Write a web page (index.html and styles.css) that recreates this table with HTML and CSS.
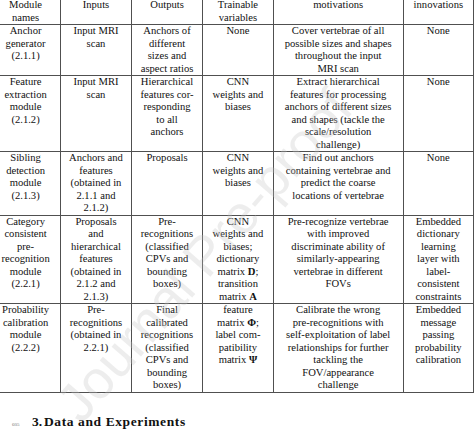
FILE: index.html
```html
<!DOCTYPE html>
<html>
<head>
<meta charset="utf-8">
<link rel="stylesheet" href="styles.css">
</head>
<body>
<div class="page">
  <table class="tbl">
    <colgroup>
      <col class="c1"><col class="c2"><col class="c3"><col class="c4"><col class="c5"><col class="c6">
    </colgroup>
    <tr>
      <td>Module<br>names</td>
      <td>Inputs</td>
      <td>Outputs</td>
      <td>Trainable<br>variables</td>
      <td>motivations</td>
      <td>innovations</td>
    </tr>
    <tr>
      <td>Anchor<br>generator<br>(2.1.1)</td>
      <td>Input MRI<br>scan</td>
      <td>Anchors of<br>different<br>sizes and<br>aspect ratios</td>
      <td>None</td>
      <td>Cover vertebrae of all<br>possible sizes and shapes<br>throughout the input<br>MRI scan</td>
      <td>None</td>
    </tr>
    <tr>
      <td>Feature<br>extraction<br>module<br>(2.1.2)</td>
      <td>Input MRI<br>scan</td>
      <td>Hierarchical<br>features cor-<br>responding<br>to all<br>anchors</td>
      <td>CNN<br>weights and<br>biases</td>
      <td>Extract hierarchical<br>features for processing<br>anchors of different sizes<br>and shapes (tackle the<br>scale/resolution<br>challenge)</td>
      <td>None</td>
    </tr>
    <tr>
      <td>Sibling<br>detection<br>module<br>(2.1.3)</td>
      <td>Anchors and<br>features<br>(obtained in<br>2.1.1 and<br>2.1.2)</td>
      <td>Proposals</td>
      <td>CNN<br>weights and<br>biases</td>
      <td>Find out anchors<br>containing vertebrae and<br>predict the coarse<br>locations of vertebrae</td>
      <td>None</td>
    </tr>
    <tr>
      <td>Category<br>consistent<br>pre-<br>recognition<br>module<br>(2.2.1)</td>
      <td>Proposals<br>and<br>hierarchical<br>features<br>(obtained in<br>2.1.2 and<br>2.1.3)</td>
      <td>Pre-<br>recognitions<br>(classified<br>CPVs and<br>bounding<br>boxes)</td>
      <td>CNN<br>weights and<br>biases;<br>dictionary<br>matrix <b>D</b>;<br>transition<br>matrix <b>A</b></td>
      <td>Pre-recognize vertebrae<br>with improved<br>discriminate ability of<br>similarly-appearing<br>vertebrae in different<br>FOVs</td>
      <td>Embedded<br>dictionary<br>learning<br>layer with<br>label-<br>consistent<br>constraints</td>
    </tr>
    <tr>
      <td>Probability<br>calibration<br>module<br>(2.2.2)</td>
      <td>Pre-<br>recognitions<br>(obtained in<br>2.2.1)</td>
      <td>Final<br>calibrated<br>recognitions<br>(classified<br>CPVs and<br>bounding<br>boxes)</td>
      <td>feature<br>matrix <b>Φ</b>;<br>label com-<br>patibility<br>matrix <b>Ψ</b></td>
      <td>Calibrate the wrong<br>pre-recognitions with<br>self-exploitation of label<br>relationships for further<br>tackling the<br>FOV/appearance<br>challenge</td>
      <td>Embedded<br>message<br>passing<br>probability<br>calibration</td>
    </tr>
  </table>
  <div class="sec">
    <span class="ln">605</span>
    <span class="num">3.</span>
    <span class="title">Data and Experiments</span>
  </div>
  <div class="wm">Journal Pre-proof</div>
</div>
</body>
</html>
```

FILE: styles.css
```css
html, body {
  margin: 0;
  padding: 0;
  overflow: hidden;
  background: #ffffff;
  font-family: "Liberation Serif", "Times New Roman", serif;
}

.page {
  position: relative;
  width: 474px;
  height: 429px;
  overflow: hidden;
  font-family: "Liberation Serif", "Times New Roman", serif;
  color: #111111;
}

.tbl {
  border-collapse: collapse;
  table-layout: fixed;
  margin: -2px 0 0 -10px;
  font-size: 10.6px;
  line-height: 12.5px;
}

.tbl td {
  border: 1px solid #505050;
  padding: 0;
  text-align: center;
  vertical-align: top;
  white-space: nowrap;
}

.tbl b {
  font-weight: bold;
}

.c1 { width: 72px; }
.c2 { width: 72px; }
.c3 { width: 73px; }
.c4 { width: 72px; }
.c5 { width: 132px; }
.c6 { width: 72px; }

.sec {
  display: flex;
  align-items: baseline;
  margin-top: 21px;
  padding-left: 12px;
}

.ln {
  font-size: 5px;
  color: #777777;
  width: 20px;
}

.num {
  font-size: 13.5px;
  font-weight: bold;
  width: 12px;
}

.title {
  font-size: 13.5px;
  font-weight: bold;
  letter-spacing: 0.6px;
}

.wm {
  position: absolute;
  left: 204px;
  top: 255px;
  transform: translate(-50%, -50%) rotate(-49deg);
  font-family: "Liberation Sans", Arial, sans-serif;
  font-size: 54px;
  color: rgba(195, 195, 195, 0.3);
  white-space: nowrap;
  pointer-events: none;
}
```
